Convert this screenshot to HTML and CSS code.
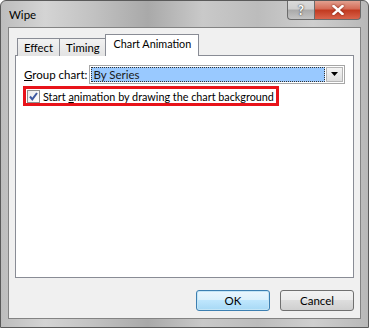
FILE: index.html
```html
<!DOCTYPE html>
<html>
<head>
<meta charset="utf-8">
<link rel="stylesheet" href="styles.css">
</head>
<body>
<div class="window">
  <div class="titlebar">
    <span class="title">Wipe</span>
    <div class="caption-btns">
      <div class="cbtn help">?</div>
      <div class="cbtn close">
        <svg width="12" height="10" viewBox="0 0 12 10"><path d="M1.5 1 L10.5 9 M10.5 1 L1.5 9" stroke="#fff" stroke-width="2.4" stroke-linecap="square"/></svg>
      </div>
    </div>
  </div>
  <div class="client">
    <div class="tabs">
      <div class="tab">Effect</div>
      <div class="tab">Timing</div>
      <div class="tab active">Chart Animation</div>
    </div>
    <div class="panel">
      <div class="row">
        <span class="label"><u>G</u>roup chart:</span>
        <div class="combo">
          <div class="combo-value">By Series</div>
          <div class="combo-btn">
            <svg width="7" height="4" viewBox="0 0 7 4"><path d="M0 0 H7 L3.5 4 Z" fill="#000"/></svg>
          </div>
        </div>
      </div>
      <div class="highlight">
        <div class="checkbox">
          <svg width="11" height="11" viewBox="0 0 11 11"><path d="M2 5.5 L4.3 8.3 L9 2" fill="none" stroke="#3c58a0" stroke-width="2"/></svg>
        </div>
        <span class="cblabel">Start <u>a</u>nimation by drawing the chart background</span>
      </div>
    </div>
    <div class="buttons">
      <div class="btn default">OK</div>
      <div class="btn">Cancel</div>
    </div>
  </div>
</div>
</body>
</html>
```
FILE: styles.css
```css
* { box-sizing: border-box; }
body {
  margin: 0;
  background: #fff;
  font-family: "Lato", "Liberation Sans", sans-serif;
  font-size: 10.8px;
  color: #000;
}
.window {
  width: 369px;
  height: 328px;
  display: flex;
  flex-direction: column;
  padding: 0 7px 8px 7px;
  border-radius: 6px 6px 0 0;
  border: 1px solid #5a5a5a;
  background: linear-gradient(90deg, #bdbdbd 0%, #d4d4d4 12%, #c2c2c2 25%, #a9a9a9 40%, #c9c9c9 55%, #bcbcbc 70%, #cfcfcf 85%, #b8b8b8 100%);
}
.titlebar {
  height: 29px;
  display: flex;
  align-items: flex-start;
  justify-content: space-between;
}
.title {
  margin-top: 7px;
  margin-left: 1px;
  font-size: 11.5px;
}
.caption-btns {
  display: flex;
}
.cbtn {
  height: 19px;
  display: flex;
  align-items: center;
  justify-content: center;
  border: 1px solid #6b6b6b;
  border-top: none;
}
.help {
  width: 27px;
  border-radius: 0 0 0 4px;
  border-right: none;
  background: linear-gradient(#dadada, #cfcfcf 45%, #a9a9a9 50%, #c4c4c4);
  color: #fff;
  font-weight: bold;
  font-size: 13px;
  text-shadow: 0 0 2px #555, 0 0 1px #333;
}
.close {
  width: 47px;
  border-radius: 0 0 4px 0;
  background: linear-gradient(#e2a08f, #d46a55 45%, #c1391f 50%, #d9644c);
}
.close svg { filter: drop-shadow(0 0 1px #7a2010); }
.client {
  flex: 1;
  background: #f0f0f0;
  border: 1px solid #838383;
  display: flex;
  flex-direction: column;
  padding: 6px 6px 7px 6px;
}
.tabs {
  display: flex;
  align-items: flex-end;
  height: 22px;
  padding-left: 2px;
  position: relative;
  z-index: 1;
  margin-bottom: -1px;
}
.tab {
  height: 18px;
  padding: 1px 6px 0 6px;
  border: 1px solid #898c95;
  border-bottom: none;
  border-right: none;
  background: linear-gradient(#f2f2f2, #e3e3e3);
  display: flex;
  align-items: center;
  line-height: 1;
  white-space: nowrap;
  font-size: 11.3px;
}
.tab.active {
  height: 22px;
  background: #fff;
  border-right: 1px solid #898c95;
  padding: 0 7px 2px 8px;
  margin-left: -1px;
  font-size: 10.8px;
}
.panel {
  height: 223px;
  background: #fff;
  border: 1px solid #898c95;
  padding: 8px 8px 0 7px;
}
.row {
  display: flex;
  align-items: center;
  height: 20px;
  font-size: 11.5px;
}
.label {
  width: 67px;
  padding-left: 1px;
  white-space: nowrap;
}
.combo {
  width: 258px;
  height: 19px;
  border: 1px solid #a6a6a6;
  display: flex;
  padding: 1px;
  background: #fff;
}
.combo-value {
  flex: 1;
  background: #99c9ff;
  outline: 1px dotted #333;
  outline-offset: -1px;
  padding-left: 2px;
  line-height: 15px;
  color: #1a1a1a;
  white-space: nowrap;
}
.combo-btn {
  width: 17px;
  margin-left: 1px;
  display: flex;
  align-items: center;
  justify-content: center;
  background: linear-gradient(#f4f4f4, #dedede);
  border: 1px solid #b4b4b4;
}
.highlight {
  margin-top: 2px;
  width: 256px;
  height: 20px;
  border: 3px solid #e8131a;
  display: flex;
  align-items: center;
  padding-left: 1px;
}
.checkbox {
  width: 13px;
  height: 13px;
  flex: none;
  border: 1px solid #8e8f8f;
  background: linear-gradient(135deg, #e9e9e9, #fff);
  display: flex;
  align-items: center;
  justify-content: center;
  margin-right: 3px;
}
.cblabel { white-space: nowrap; }
.buttons {
  display: flex;
  justify-content: flex-end;
  gap: 10px;
  margin-top: 12px;
  font-size: 11.5px;
}
.btn {
  width: 74px;
  height: 21px;
  border: 1px solid #707070;
  border-radius: 3px;
  background: linear-gradient(#f2f2f2, #ebebeb 50%, #dddddd 50%, #cfcfcf);
  display: flex;
  align-items: center;
  justify-content: center;
}
.btn.default {
  border-color: #3c7fb1;
  background: linear-gradient(#eaf6fd, #d9f0fc 50%, #bee6fd 50%, #a7d9f5);
  box-shadow: inset 0 0 0 1px #c4e5f6;
}
```
